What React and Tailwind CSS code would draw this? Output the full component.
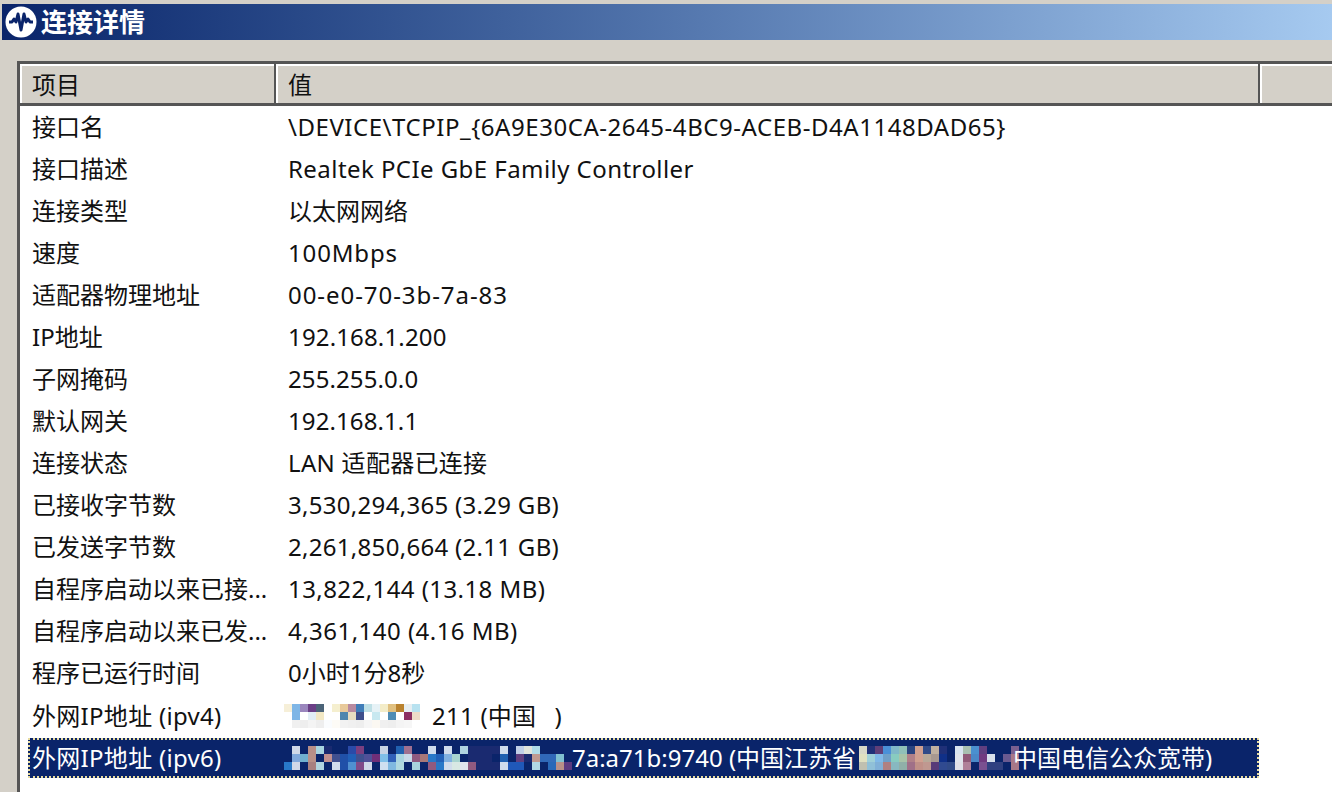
import React from "react";

const rows = [
  ["接口名", "\\DEVICE\\TCPIP_{6A9E30CA-2645-4BC9-ACEB-D4A1148DAD65}", "tracking-[0.54px]"],
  ["接口描述", "Realtek PCIe GbE Family Controller", "tracking-[0.44px]"],
  ["连接类型", "以太网网络", ""],
  ["速度", "100Mbps", "tracking-[0.85px]"],
  ["适配器物理地址", "00-e0-70-3b-7a-83", "tracking-[0.94px]"],
  ["IP地址", "192.168.1.200", "tracking-[0.15px]"],
  ["子网掩码", "255.255.0.0", "tracking-[0.1px]"],
  ["默认网关", "192.168.1.1", "tracking-[0.1px]"],
  ["连接状态", "LAN 适配器已连接", "tracking-[0.3px]"],
  ["已接收字节数", "3,530,294,365 (3.29 GB)", "tracking-[0.3px]"],
  ["已发送字节数", "2,261,850,664 (2.11 GB)", "tracking-[0.3px]"],
  ["自程序启动以来已接...", "13,822,144 (13.18 MB)", "tracking-[0.43px]"],
  ["自程序启动以来已发...", "4,361,140 (4.16 MB)", "tracking-[0.47px]"],
  ["程序已运行时间", "0小时1分8秒", ""],
];

function Mosaic({ cells, width, height }) {
  return (
    <svg width={width} height={height} className="block shrink-0" shapeRendering="crispEdges">
      {cells.map((row, y) =>
        row.map((c, x) => (c ? <rect key={x} x={x * 8} y={y * 8} width="8" height="8" fill={c} /> : null))
      )}
    </svg>
  );
}

const v4 = [
  ["#f6efd8", "#7fb6e6", "#9a86bd", "#6b3f86", "#4c6478", "#fff", "#f5efcf", "#e8c99a", "#b88aa0", "#3f7db8", "#bfe0e6", "#e6f2f6", "#f3ecc8", "#e0c080", "#b9822f", "#e6eef2", "#b8e2f0", "#fff"],
  ["#fff", "#7fb6e6", "#fff", "#e2eef6", "#f2e8c4", "#fff", "#fff", "#4f86ae", "#e8ddc0", "#3f4f8c", "#fff", "#c8e8f0", "#fff", "#4f8cb4", "#fff", "#8c2f62", "#eedcc8", "#fff"],
  ["#fff", "#f0f0f0", "#eee", "#f4f4f4", "#eee", "#fafcfe", "#fdfbf6", "#f2f2f2", "#f0f0f0", "#eee", "#f6f6f6", "#fbf8f2", "#f0f0f0", "#eee", "#f4f4f4", "#f6f6f6", "#fff", "#fff"],
];

const n = "#0a246a";
const d = "#1a2a70";
const v6 = [
  [n, "#d0d8e8", n, "#b88f88", "#a8d4e0", d, n, n, "#2a4aa8", "#7a3f80", n, n, "#c8d4e4", n, "#2060b0", "#a07090", n, n, "#d0dcec", n, "#d0dcec", n, "#b0d4e0", d, d, d, d, "#d0dcec", n, "#c0d0e8", "#e0e4dc", "#b0dce8", n, n, n, n],
  [n, "#80a8dc", "#70b0d0", "#b89088", n, "#c09090", "#405090", "#2050a8", "#2060b8", "#405090", "#505098", "#702f78", "#80c0e8", "#3060b8", "#a8d4e0", "#c8d8e8", "#905a80", "#a87878", "#2878c8", "#2060b8", "#80b0e0", "#a8d4d0", n, d, d, d, n, "#2060b0", n, "#603f80", d, "#c09a90", "#3068b8", "#3068b8", "#80c0d0", n],
  ["#2878c8", "#d0d8e8", n, "#a88080", "#b0d4e0", n, "#d0dcec", "#2050a8", "#5090d0", "#804a88", "#d0d8e8", n, "#d0e0f0", "#80b8e0", "#b0d8e0", n, "#a8d4dc", n, "#905a80", "#2878c8", "#d0dcec", "#d8e8e4", "#e0e4ec", "#905a80", d, d, d, "#d0dcec", "#2058b8", "#2058b8", n, "#b0d8e4", n, "#2868b8", "#b89088", "#5a3a80"],
];

const v6b = [
  ["#d8d8c8", "#203078", "#603f78", "#4a90d8", "#80b8c8", "#90c0b8", "#2a4480", "#d0a090", "#304a88", "#c0b0a0", "#203078", n, "#d8e4f0", "#a8c0b0", "#4a90d0", "#603f80", n, n, n, "#7a6090"],
  ["#e0e0c0", "#a0d0d8", "#80b8e8", "#70a0c8", "#88ccc0", "#a8c4a8", "#b08088", "#d0a090", "#b8a898", "#a89890", "#103088", n, "#e0e4ec", "#905a78", "#4a88c8", "#703a80", "#d8e0ec", n, "#6a5a90", "#a87888"],
  ["#c0c0b0", "#90c0d8", "#80b0d8", "#b08080", "#88b8c0", "#90b0a8", "#a07088", "#c09088", "#c09890", "#583a78", "#304a90", "#304a88", "#e0e0e8", "#b08098", n, "#7a5090", "#304080", "#304080", n, "#a87888"],
];

function ListRow({ label, labelClass, children, selected, valueClass }) {
  return (
    <div className={`flex items-center ${selected ? "h-[40px] text-white" : "h-[42px] text-[#111]"}`}>
      <div className={`shrink-0 whitespace-nowrap leading-[32px] ${labelClass || ""} ${selected ? "w-[248px] pl-[4px]" : "w-[256px] pl-[12px]"}`}>{label}</div>
      <div className={`flex min-w-0 flex-1 items-center whitespace-nowrap pl-[12px] leading-[32px] ${valueClass || ""}`}>{children}</div>
    </div>
  );
}

export default function App() {
  return (
    <div className="h-[792px] w-[1332px] overflow-hidden bg-[#d4d0c8] pt-[4px] pl-[2px] text-[24px] [font-family:'Noto_Sans','Noto_Sans_CJK_SC',sans-serif]">
      {/* title bar */}
      <div className="flex h-[36px] items-center gap-[4px] bg-gradient-to-r from-[#0a246a] to-[#a6caf0] pl-[3px] text-[26px] font-bold text-white">
        <svg width="32" height="32" viewBox="0 0 32 32" className="shrink-0">
          <circle cx="16" cy="16" r="15.5" fill="#fff" />
          <path d="M4 16h3l2-3 2 3 2-8 3 16 3-16 2 8 2-3 2 3h3" fill="none" stroke="#0a246a" strokeWidth="3" strokeLinejoin="round" />
        </svg>
        <span className="leading-[36px]">连接详情</span>
      </div>

      {/* list */}
      <div className="mt-[21px] ml-[15px] h-[800px] border-t-[3px] border-l-[3px] border-[#555] bg-white">
        <div className="flex h-[42px] border-b-[3px] border-[#555] bg-[#d4d0c8] text-[#111]">
          <div className="flex w-[254px] shrink-0 items-center border-t-[2px] border-l-[2px] border-white pl-[10px]">项目</div>
          <div className="w-[2px] shrink-0 bg-[#555]" />
          <div className="flex w-[982px] shrink-0 items-center border-t-[2px] border-l-[2px] border-white pl-[10px]">值</div>
          <div className="w-[2px] shrink-0 bg-[#555]" />
          <div className="flex-1 border-t-[2px] border-l-[2px] border-white" />
        </div>

        <div>
          {rows.map(([label, value, valueClass]) => (
            <ListRow key={label} label={label} valueClass={valueClass}>{value}</ListRow>
          ))}
          <div className="mt-[1px]">
            <ListRow label="外网IP地址 (ipv4)" labelClass="tracking-[0.3px]">
              <span className="-ml-[4px] mr-[4px]"><Mosaic cells={v4} width={144} height={24} /></span>
              <span className="tracking-[0.25px]">211 (中国</span>
              <span className="ml-[18px]">)</span>
            </ListRow>
          </div>
          <div className="mt-[1px] ml-[8px] w-[1231px] bg-[#0a246a] outline-2 -outline-offset-2 outline-dotted outline-[#e8dca0]">
            <ListRow label="外网IP地址 (ipv6)" labelClass="tracking-[0.3px]" selected>
              <span className="-ml-[4px]"><Mosaic cells={v6} width={288} height={24} /></span>
              <span>7a:a71b:9740 (中国江苏省</span>
              <span className="ml-[3px]"><Mosaic cells={v6b} width={160} height={24} /></span>
              <span className="-ml-[6px]">中国电信公众宽带)</span>
            </ListRow>
          </div>
        </div>
      </div>
    </div>
  );
}
